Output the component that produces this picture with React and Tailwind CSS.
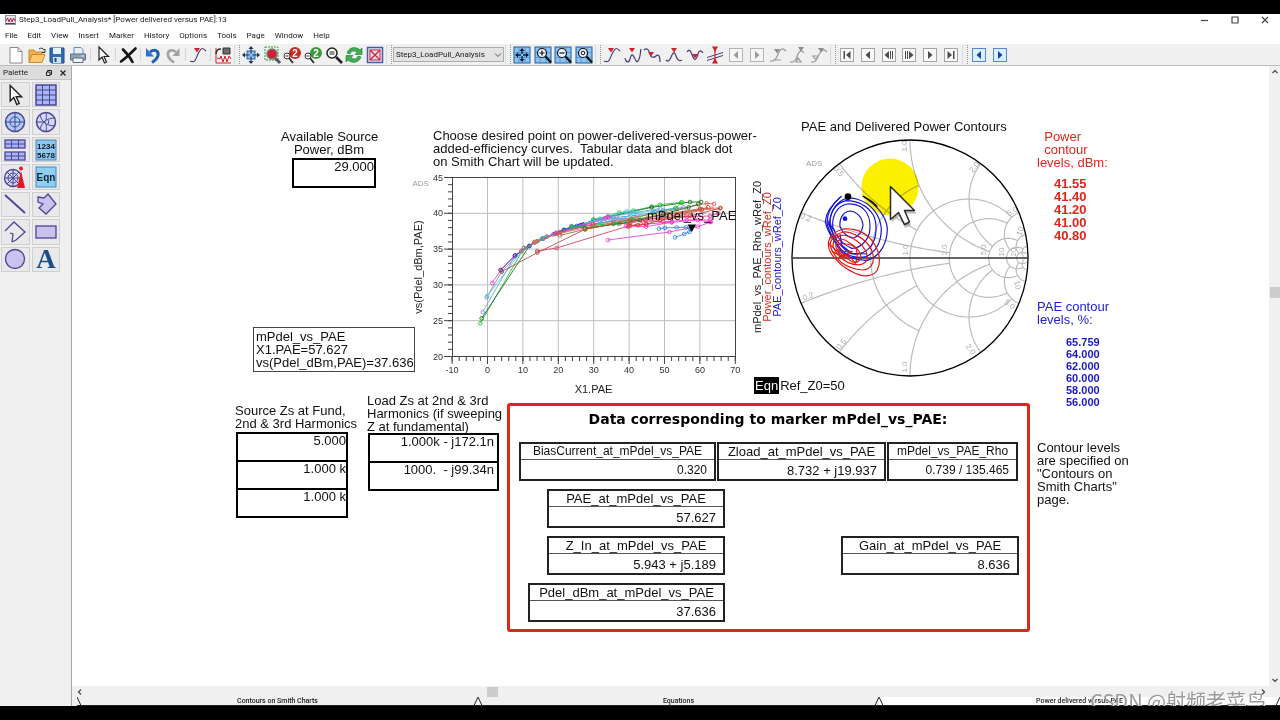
import React from "react";

/* ---------- toolbar icons (20 x 20) ---------- */

const Icon = ({ children, className = "size-5" }) => (
  <svg viewBox="0 0 20 20" className={className} fill="none" aria-hidden="true">
    {children}
  </svg>
);

const NewIcon = () => (
  <Icon>
    <path d="M4 2.500h8l4 4V18H4z" fill="#fff" stroke="#8a8a8a" />
    <path d="M12 2.500v4h4" stroke="#8a8a8a" />
  </Icon>
);
const OpenIcon = () => (
  <Icon>
    <path d="M2 5h5l1.500 2H15v3H5L2 17z" fill="#f3b04a" stroke="#c98a2b" />
    <path d="M2 17.500L5 9.500h13l-3 8z" fill="#ffc76b" stroke="#c98a2b" />
    <path d="M12 4c2-1.500 4-1 5 1l1-1v3.500h-3l1-1" stroke="#333" />
  </Icon>
);
const SaveIcon = () => (
  <Icon>
    <path d="M3 3h14v15H4.500L3 16.500z" fill="#2f6db5" stroke="#1b4b8a" />
    <path d="M6 3h8v6H6z" fill="#e8f1fb" />
    <path d="M6 12h8v6H6z" fill="#cfe0f3" />
    <path d="M7.500 13h2v4h-2z" fill="#1b4b8a" />
  </Icon>
);
const PrintIcon = () => (
  <Icon>
    <path d="M6 9V2.500h7l2 2V9" fill="#e6f0fa" stroke="#6d8fb3" />
    <path d="M2.500 9h15v6h-15z" fill="#8ea3b8" stroke="#5d6f82" />
    <path d="M5 13h10v4.500H5z" fill="#f4f4f4" stroke="#5d6f82" />
    <path d="M13 11h3" stroke="#e8eef5" />
  </Icon>
);
const PointerIcon = ({ className }) => (
  <Icon className={className}>
    <path d="M6 2v13l3-3 2.500 6 2-1-2.500-5.500h4.500z" fill="#fff" stroke="#222" strokeWidth="1.200" />
  </Icon>
);
const CrossIcon = () => (
  <Icon>
    <path d="M3 16.500C8 13 13 8 17.500 3.500M5 4.500c3 3 7 7.500 9.500 12.500" stroke="#151515" strokeWidth="2.600" strokeLinecap="round" />
  </Icon>
);
const UndoIcon = () => (
  <Icon>
    <path d="M7 7c5-3.500 9-1 8 3.500-.7 3-3 5-6 7" stroke="#1d5fae" strokeWidth="3" />
    <path d="M3 3v8.500h8z" fill="#2c74c7" />
  </Icon>
);
const RedoIcon = () => (
  <Icon>
    <path d="M13 7C8 3.500 4 6 5 10.500c.7 3 3 5 6 7" stroke="#a2a2a2" strokeWidth="2.600" />
    <path d="M16.500 3v8h-7z" fill="#a2a2a2" />
  </Icon>
);

const RED = "#d3202c";
const INK = "#4a3b78";

const MarkerCurve = ({ d, mx = 10, my = 7, color = RED, ink = INK }) => (
  <Icon>
    <path d={d} stroke={ink} strokeWidth="1.200" />
    <path d={`M${mx - 3} ${my - 4}h6l-3 4.500z`} fill={color} />
  </Icon>
);
const TraceIcon = () => <MarkerCurve d="M2 16c6 3 6-4 9-9s4-4 7-1" mx={9} my={7} />;
const PeakIcon = () => <MarkerCurve d="M2 13c1 5 4 5 5 1s2-6 4-2 3 7 5 2 1-6 2-10" mx={9} my={7} />;
const SlopeIcon = () => <MarkerCurve d="M1 5c3-3 5 0 6 4s4 4 6 2 4-1 4 6" mx={8} my={11} />;
const MaxIcon = () => <MarkerCurve d="M2 15c3 3 4-1 6-5s3-2 4 1 3 6 6 4" mx={10} my={7} />;
const MinIcon = () => <MarkerCurve d="M2 7c3-4 4 0 6 5s4 1 5-3 3-4 5-1" mx={10} my={13} />;
const LineMarkerIcon = () => (
  <Icon>
    <path d="M2 12.500l16-5M2 15.500l16-5" stroke={INK} />
    <path d="M10 3v14" stroke={RED} strokeWidth="1.200" />
    <path d="M7 1.500h6L10 7zM7 18.500h6L10 13z" fill={RED} />
  </Icon>
);
const GreyA = () => <MarkerCurve d="M2 16c6 1 7-5 9-9s4-4 7-1M5 15h8" mx={9} my={8} color="#8d8d8d" ink="#9a9a9a" />;
const GreyB = () => <MarkerCurve d="M2 17c6 1 6-4 8-8s4-4 6-1M8 17l2-4 3 4z" mx={13} my={6} color="#8d8d8d" ink="#9a9a9a" />;
const GreyC = () => <MarkerCurve d="M2 17c6 1 6-5 9-9s4-4 7-1M4 11h5l-2 4z" mx={12} my={7} color="#8d8d8d" ink="#9a9a9a" />;

const ReportIcon = () => (
  <Icon>
    <path d="M3 3v15h15" stroke={RED} />
    <path d="M4 13l3 1 1-3 2 6 2-6 2 6 2-6 2 3" stroke={RED} />
    <path d="M10 3h7v6h-7z" fill="#6d6d6d" stroke="#333" />
    <path d="M3 9c0-4 2-5 5-5" stroke="#333" strokeWidth="1.500" />
  </Icon>
);

const ViewAllIcon = () => (
  <Icon>
    <rect x="6" y="6" width="8" height="8" fill="#8dbbe8" stroke="#2a62a8" />
    <path d="M10 1l2.500 3h-2v4.500H9.500V4h-2zM10 19l-2.500-3h2v-4.500h1V16h2zM1 10l3-2.500v2h4.500v1H4v2zM19 10l-3 2.500v-2h-4.500v-1H16v-2z" fill="#17345f" />
  </Icon>
);
const ZoomAreaIcon = () => (
  <Icon>
    <rect x="3" y="2" width="13" height="13" stroke="#2d9a3c" strokeDasharray="2 1" />
    <path d="M13 13l5 5" stroke="#555" strokeWidth="3" />
    <circle cx="10" cy="9" r="5" fill="#d8202c" stroke="#777" strokeWidth="1.500" />
  </Icon>
);
const ZoomTwo = ({ color }) => (
  <Icon>
    <circle cx="13" cy="8" r="6" fill={color} />
    <text x="13" y="12" fontSize="10" fontWeight="700" fill="#fff" textAnchor="middle" fontFamily="Liberation Sans, sans-serif">2</text>
    <circle cx="5" cy="11" r="3" fill="#fff" stroke="#333" />
    <path d="M3.500 11h3" stroke="#333" />
    <path d="M7 13l4 5" stroke="#333" strokeWidth="2" />
  </Icon>
);
const ZoomPlain = () => (
  <Icon>
    <circle cx="8" cy="8" r="5" fill="#fff" stroke="#222" strokeWidth="1.500" />
    <path d="M5.500 7h5M5.500 9h5" stroke="#222" />
    <path d="M12 12l6 6" stroke="#222" strokeWidth="2.600" />
  </Icon>
);
const RefreshIcon = () => (
  <Icon>
    <path d="M3 8c2-6 9-7 13-3l2-2v6.500h-7l2-2C10 5 7 6 6 9z" fill="#3fae52" stroke="#1f7d33" strokeWidth=".6" />
    <path d="M17 12c-2 6-9 7-13 3l-2 2v-6.500h7l-2 2c3 2.500 6 1.500 7-1.500z" fill="#3fae52" stroke="#1f7d33" strokeWidth=".6" />
  </Icon>
);
const StopIcon = () => (
  <Icon>
    <rect x="2.500" y="2.500" width="15" height="15" fill="#dfe6f6" stroke="#4a5aa8" strokeWidth="1.500" />
    <path d="M5 5l10 10M15 5L5 15" stroke={RED} strokeWidth="1.400" />
    <rect x="5" y="5" width="10" height="10" stroke={RED} />
  </Icon>
);

const BlueTile = ({ children }) => (
  <Icon>
    <rect x="2" y="2" width="16" height="16" fill="#8cc3f2" stroke="#1f5ca0" />
    <path d="M2 7.500h16M2 12.500h16M7 2v16M13 2v16" stroke="#4d8ed0" strokeWidth=".8" />
    {children}
  </Icon>
);
const TileGlass = ({ children }) => (
  <BlueTile>
    <circle cx="9" cy="8" r="4.500" fill="#eef6ff" stroke="#111" strokeWidth="1.200" />
    <path d="M12.500 11.500l5.500 6" stroke="#111" strokeWidth="2.200" />
    {children}
  </BlueTile>
);
const TileFit = () => (
  <BlueTile>
    <path d="M10 3l2.500 3h-5zM10 17l-2.500-3h5zM3 10l3-2.500v5zM17 10l-3 2.500v-5zM9.300 6h1.400v3h-1.400zM9.300 11h1.400v3h-1.400zM6 9.300h3v1.400H6zM11 9.300h3v1.400h-3z" fill="#0d1b33" />
  </BlueTile>
);
const TileIn = () => (
  <TileGlass>
    <path d="M6.500 8h5M9 5.500v5" stroke="#111" strokeWidth="1.200" />
  </TileGlass>
);
const TileOut = () => (
  <TileGlass>
    <path d="M6.500 8h5" stroke="#111" strokeWidth="1.200" />
  </TileGlass>
);
const TileArea = () => (
  <TileGlass>
    <circle cx="9" cy="8" r="1.800" stroke="#111" />
  </TileGlass>
);

const StepIcon = ({ d, tone = "grey" }) => {
  const tones = {
    faint: { box: "#b4b4b4", bg: "#f6f6f6", ink: "#9c9c9c" },
    grey: { box: "#a5a5a5", bg: "#fbfbfb", ink: "#4b4b4b" },
    blue: { box: "#5b86d6", bg: "#d9f0ff", ink: "#1c3fa0" },
  };
  const t = tones[tone];
  return (
    <Icon>
      <rect x="3.500" y="3.500" width="13" height="13" fill={t.bg} stroke={t.box} />
      <path d={d} fill={t.ink} />
    </Icon>
  );
};
const LEFT = "M12 6v8l-4.500-4z";
const RIGHT = "M8 6v8l4.500-4z";
const FIRST = "M13.500 6v8L9 10zM6.500 6H8v8H6.500z";
const LAST = "M6.500 6v8l4.500-4zM12 6h1.500v8H12z";
const BACK = "M10 6v8l-4.500-4zM11 6h1v8h-1zM13 6h1v8h-1z";
const FORE = "M10 6v8l4.500-4zM8 6h1v8H8zM6 6h1v8H6z";

const ToolButton = ({ label, children }) => (
  <button type="button" aria-label={label} className="flex size-5 shrink-0 items-center justify-center">
    {children}
  </button>
);
const Thin = () => (
  <span className="flex h-full w-[5px] shrink-0 justify-center py-1">
    <span className="w-px bg-[#d4d4d4]" />
  </span>
);
const Grip = () => (
  <span className="flex h-full w-2 shrink-0 justify-center gap-1 py-px">
    <span className="w-px bg-[#dadada]" />
    <span className="w-px border-l border-dotted border-[#9a9a9a]" />
  </span>
);

const Toolbar = () => (
  <div role="toolbar" className="flex h-[22px] shrink-0 items-center overflow-hidden border-b border-[#bdbdbd] bg-[#f0f0f0] pl-[6px]">
    <div className="flex w-[82px] shrink-0 justify-between">
      <ToolButton label="New"><NewIcon /></ToolButton>
      <ToolButton label="Open"><OpenIcon /></ToolButton>
      <ToolButton label="Save"><SaveIcon /></ToolButton>
      <ToolButton label="Print"><PrintIcon /></ToolButton>
    </div>
    <Thin />
    <ToolButton label="Select"><PointerIcon /></ToolButton>
    <Thin />
    <ToolButton label="Delete"><CrossIcon /></ToolButton>
    <Thin />
    <ToolButton label="Undo"><UndoIcon /></ToolButton>
    <ToolButton label="Redo"><RedoIcon /></ToolButton>
    <Thin />
    <ToolButton label="Insert marker"><TraceIcon /></ToolButton>
    <Thin />
    <ToolButton label="Plot options"><ReportIcon /></ToolButton>
    <Grip />
    <div className="flex w-[144px] shrink-0 justify-between">
      <ToolButton label="View all"><ViewAllIcon /></ToolButton>
      <ToolButton label="Zoom to area"><ZoomAreaIcon /></ToolButton>
      <ToolButton label="Zoom out by two"><ZoomTwo color="#c92a22" /></ToolButton>
      <ToolButton label="Zoom in by two"><ZoomTwo color="#3b9a3a" /></ToolButton>
      <ToolButton label="Actual size"><ZoomPlain /></ToolButton>
      <ToolButton label="Refresh"><RefreshIcon /></ToolButton>
      <ToolButton label="Stop"><StopIcon /></ToolButton>
    </div>
    <Grip />
    <div className="relative w-[111px] shrink-0">
      <select aria-label="Default dataset" className="block h-[15px] w-full appearance-none rounded-none border border-[#adadad] bg-[#e3e3e3] px-[2px] py-0 text-[8px] leading-[13px] text-[#1a1a1a]">
        <option>Step3_LoadPull_Analysis</option>
      </select>
      <svg viewBox="0 0 8 8" className="pointer-events-none absolute right-[2px] top-1 size-2" fill="none" aria-hidden="true">
        <path d="M1 2.500L4 5.500l3-3" stroke="#555" />
      </svg>
    </div>
    <Grip />
    <div className="flex w-[82px] shrink-0 justify-between">
      <ToolButton label="Fit plot"><TileFit /></ToolButton>
      <ToolButton label="Zoom plot in"><TileIn /></ToolButton>
      <ToolButton label="Zoom plot out"><TileOut /></ToolButton>
      <ToolButton label="Zoom plot area"><TileArea /></ToolButton>
    </div>
    <Grip />
    <div className="flex w-[227px] shrink-0 justify-between">
      <ToolButton label="New marker"><TraceIcon /></ToolButton>
      <ToolButton label="Peak marker"><PeakIcon /></ToolButton>
      <ToolButton label="Valley marker"><SlopeIcon /></ToolButton>
      <ToolButton label="Max marker"><MaxIcon /></ToolButton>
      <ToolButton label="Min marker"><MinIcon /></ToolButton>
      <ToolButton label="Line marker"><LineMarkerIcon /></ToolButton>
      <ToolButton label="Marker left"><StepIcon d={LEFT} tone="faint" /></ToolButton>
      <ToolButton label="Marker right"><StepIcon d={RIGHT} tone="faint" /></ToolButton>
      <ToolButton label="Delta marker"><GreyA /></ToolButton>
      <ToolButton label="Marker off"><GreyB /></ToolButton>
      <ToolButton label="Delta off"><GreyC /></ToolButton>
    </div>
    <Grip />
    <div className="flex w-[124px] shrink-0 justify-between">
      <ToolButton label="First"><StepIcon d={FIRST} /></ToolButton>
      <ToolButton label="Back"><StepIcon d={LEFT} /></ToolButton>
      <ToolButton label="Step back"><StepIcon d={BACK} /></ToolButton>
      <ToolButton label="Step forward"><StepIcon d={FORE} /></ToolButton>
      <ToolButton label="Forward"><StepIcon d={RIGHT} /></ToolButton>
      <ToolButton label="Last"><StepIcon d={LAST} /></ToolButton>
    </div>
    <Grip />
    <div className="flex shrink-0 gap-px">
      <ToolButton label="Previous page"><StepIcon d={LEFT} tone="blue" /></ToolButton>
      <ToolButton label="Next page"><StepIcon d={RIGHT} tone="blue" /></ToolButton>
    </div>
  </div>
);

/* ---------- palette ---------- */

const Pal = ({ children }) => (
  <svg viewBox="0 0 24 24" className="size-6" fill="none" stroke="#4f4394" aria-hidden="true">
    {children}
  </svg>
);

const palette = [
  ["Pointer", <PointerIcon key="i" className="size-6" />],
  [
    "Rectangular plot",
    <Pal key="i">
      <rect x="2" y="2" width="20" height="20" fill="#a5b8f4" strokeWidth="1.500" />
      <path d="M8.500 2v20M15.500 2v20M2 7h20M2 12h20M2 17h20" />
    </Pal>,
  ],
  [
    "Polar plot",
    <Pal key="i">
      <circle cx="12" cy="12" r="9.500" fill="#a9cdf5" strokeWidth="1.500" />
      <circle cx="12" cy="12" r="5" />
      <path d="M2 12h20M12 2v20" />
    </Pal>,
  ],
  [
    "Smith chart",
    <Pal key="i">
      <circle cx="12" cy="12" r="9.500" fill="#cfd8f6" strokeWidth="1.500" />
      <path d="M2 12h8M6 5c1 4 3 6 4 7-1 1-3 3-4 7M10 12c2-1 3-4 2-9M10 12c2 1 3 4 2 9M21 8c-4 0-8 1-11 4 3 3 7 4 11 4M14 10c1 1 1 3 0 4" />
    </Pal>,
  ],
  [
    "Stacked plot",
    <Pal key="i">
      <rect x="2" y="2" width="20" height="8" fill="#a5b8f4" strokeWidth="1.300" />
      <rect x="2" y="14" width="20" height="8" fill="#a5b8f4" strokeWidth="1.300" />
      <path d="M2 6h20M2 18h20M8.500 2v8M15.500 2v8M8.500 14v8M15.500 14v8" />
    </Pal>,
  ],
  [
    "List",
    <Pal key="i">
      <rect x="2" y="2" width="20" height="20" fill="#8fc6ee" stroke="#4a86b8" />
      <g fill="#0a1a24" stroke="none" fontSize="8" fontWeight="700" fontFamily="Liberation Sans, sans-serif" textAnchor="middle">
        <text x="12" y="10.500">1234</text>
        <text x="12" y="20">5678</text>
      </g>
    </Pal>,
  ],
  [
    "Antenna plot",
    <Pal key="i">
      <circle cx="10" cy="13" r="8.500" fill="#cfd8f6" strokeWidth="1.300" />
      <circle cx="10" cy="13" r="5" />
      <path d="M2 13h16M10 5v16M4 7l12 12M16 7L4 19" />
      <path d="M18 6l4 17h-8z" fill="#e01b24" stroke="none" />
      <circle cx="18" cy="3.500" r="2" fill="#e01b24" stroke="none" />
    </Pal>,
  ],
  [
    "Equation",
    <Pal key="i">
      <rect x="2" y="2" width="20" height="20" fill="#8fd0f2" stroke="#4a86b8" />
      <text x="12" y="15.500" fill="#0a2433" stroke="none" fontSize="10" fontWeight="700" fontFamily="Liberation Sans, sans-serif" textAnchor="middle">Eqn</text>
    </Pal>,
  ],
  ["Line", <Pal key="i"><path d="M2 3l20 18" strokeWidth="1.800" /></Pal>],
  ["Polygon", <Pal key="i"><path d="M4 5l6 1 4-4 8 10-10 10-7-6 4-4-5-2z" fill="#c9c3ee" strokeWidth="1.300" /></Pal>],
  ["Polyline", <Pal key="i"><path d="M2 11l9-9 11 10-9 8M9 22l1-8-3-1M9 22l4-2" strokeWidth="1.300" /></Pal>],
  ["Rectangle", <Pal key="i"><rect x="2" y="6" width="20" height="12" fill="#c9c3ee" strokeWidth="1.300" /></Pal>],
  ["Circle", <Pal key="i"><circle cx="12" cy="12" r="9.500" fill="#c9c3ee" strokeWidth="1.300" /></Pal>],
  [
    "Text",
    <Pal key="i">
      <text x="12" y="21" fill="#1d4f86" stroke="none" fontSize="27" fontWeight="700" fontFamily="Liberation Serif, serif" textAnchor="middle">A</text>
    </Pal>,
  ],
];

const Palette = () => (
  <aside className="w-[72px] shrink-0 border-r border-[#a9a9a9] bg-[#f0f0f0]">
    <div className="flex h-[14px] items-center border-b border-[#c4c4c4] bg-[#dcdcdc] pl-[3px] pr-1">
      <h2 className="flex-1 text-[8px] leading-[12px]">Palette</h2>
      <button type="button" aria-label="Float palette" className="mr-[6px]">
        <svg viewBox="0 0 8 8" className="size-2" fill="none" stroke="#222" aria-hidden="true">
          <path d="M2.500 3V1.500h4v4H5M1.500 3h3.500v3.500H1.500z" />
        </svg>
      </button>
      <button type="button" aria-label="Close palette">
        <svg viewBox="0 0 8 8" className="size-2" fill="none" stroke="#222" strokeWidth="1.200" aria-hidden="true">
          <path d="M1.500 1.500l5 5M6.500 1.500l-5 5" />
        </svg>
      </button>
    </div>
    <div className="grid h-[192px] w-[60px] grid-cols-2 grid-rows-7 gap-[2px] pl-px pt-[2px]">
      {palette.map(([label, icon]) => (
        <button key={label} type="button" aria-label={label} className="flex items-center justify-center border border-[#cfcfcf] bg-[#e9e9ec]">
          {icon}
        </button>
      ))}
    </div>
  </aside>
);

/* ---------- Pdel versus PAE plot ---------- */

/* coordinates are three units to the pixel */
const curves = [
  ["#19c22b", "241,610 372,384 404,366 426,356 470,340 515,318 545,316 580,299 625,288 658,278 700,272 755,260 780,254 844,247"],
  ["#0b6b16", "245,595 388,378 412,364 440,350 492,330 515,320 550,314 580,300 755,262 870,246 903,246"],
  ["#8b8b8b", "260,532 305,455 372,384 426,356 492,330 545,316"],
  ["#7f8fe0", "248,576 345,408 388,378 440,350 515,320 625,292 688,280 780,266"],
  ["#e23ad2", "277,489 302,450 345,408 365,393 404,368 460,343 480,336 545,318 616,295"],
  ["#2b2bd8", "302,450 345,406 388,378 430,356 465,341 492,330 530,318 540,316 545,315 550,314"],
  ["#35cfe0", "262,528 366,392 426,356 470,340 600,296 680,274 705,274"],
  ["#a44a3a", "305,455 412,398 555,328 640,312 690,310 735,300 800,290 905,268"],
  ["#d8305f", "412,393 470,384 685,318 740,312 815,306"],
  ["#e23ad2", "624,360 808,336 893,320 933,306"],
  ["#2f7fe0", "777,326 795,324 830,322 858,322 872,326 868,336 853,342 825,352"],
  ["#e05048", "364,393 404,366 480,338 580,312 700,292 830,268 920,250 942,252"],
  ["#e07048", "404,366 470,342 580,318 690,300 860,272 900,266 962,264"],
  ["#e23a9a", "470,338 578,314 640,304 740,296 860,290 930,288 955,280"],
  ["#ff2fd0", "545,318 616,294 625,292 700,300 790,306 860,300 930,300"],
  ["#35cfe0", "580,300 605,310 640,298 672,294 700,280 760,272 825,266"],
  ["#0b6b16", "555,325 658,311 720,300 790,282 866,262 895,252"],
  ["#19c22b", "515,322 640,310 695,297 758,280 827,264 846,248"],
  ["#c4302a", "690,318 714,316 738,313 780,300 870,288 960,265"],
  ["#b05a30", "480,346 555,328 690,302 800,284 900,268 924,262"],
  ["#ff2fd0", "678,318 738,320 815,307 893,300 930,306"],
  ["#5a9be0", "600,304 650,292 712,286 764,276 790,270 850,262"],
  ["#e05048", "684,320 730,306 790,296 850,284 905,270 935,266"],
];

const xTicks = [-10, 0, 10, 20, 30, 40, 50, 60, 70];
const yTicks = [20, 25, 30, 35, 40, 45];
const px = (v) => 487.5 + v * 3.54;
const py = (v) => 356.5 - (v - 20) * 7.16;
const range = (a, b, s) => Array.from({ length: Math.round((b - a) / s) + 1 }, (_, i) => a + i * s);

const PaePlot = () => (
  <svg viewBox="412 168 340 226" className="h-[226px] w-[340px]" fill="none" fontFamily="Liberation Sans, Arial, sans-serif" role="img" aria-label="vs(Pdel_dBm,PAE) against X1.PAE">
    <g stroke="#bdbdbd">
      {xTicks.slice(1, -1).map((v) => <path key={v} d={`M${px(v)} 177.500V356`} />)}
      {yTicks.slice(1, -1).map((v) => <path key={v} d={`M452 ${py(v)}H735`} />)}
    </g>
    <g stroke="#444">
      {range(-10, 70, 2).map((v) => <path key={v} d={`M${px(v)} 356v5`} />)}
      {range(20, 45, 1).map((v) => <path key={v} d={`M448 ${py(v)}h4`} />)}
      {xTicks.map((v) => <path key={v} d={`M${px(v)} 356v8`} />)}
      {yTicks.map((v) => <path key={v} d={`M444 ${py(v)}h8`} />)}
      <rect x="452.500" y="177.500" width="283" height="179" />
    </g>
    <g transform="translate(400 120) scale(0.33333)">
      {curves.map(([color, pts], i) => (
        <g key={i} stroke={color} strokeWidth="2.500">
          <polyline points={pts} />
          {pts.split(" ").map((p) => {
            const [x, y] = p.split(",");
            return <circle key={p} cx={x} cy={y} r="5.500" />;
          })}
        </g>
      ))}
    </g>
    <path d="M687.500 224.500h8.500l-4.200 7.500z" fill="#000" />
    <text x="647" y="220" fontSize="13" fill="#111">mPdel_vs_PAE</text>
    <g fontSize="9" fill="#333">
      {xTicks.map((v) => <text key={v} x={px(v)} y="373" textAnchor="middle">{v}</text>)}
      {yTicks.map((v) => <text key={v} x="443" y={py(v) + 3} textAnchor="end">{v}</text>)}
    </g>
    <text x="412.500" y="186" fontSize="8" fill="#999">ADS</text>
    <text x="593.500" y="393" fontSize="11" fill="#222" textAnchor="middle">X1.PAE</text>
    <text transform="translate(422 267) rotate(-90)" fontSize="11" fill="#222" textAnchor="middle">vs(Pdel_dBm,PAE)</text>
  </svg>
);

/* ---------- Smith chart ---------- */

const CX = 910;
const CY = 258;
const R = 118;
const gamma = (r, x) => {
  const d = (r + 1) * (r + 1) + x * x;
  const re = ((r - 1) * (r + 1) + x * x) / d;
  const im = (2 * x) / d;
  return `${(CX + R * re).toFixed(2)},${(CY - R * im).toFixed(2)}`;
};
const resistanceArc = (r, limit) => {
  const a = Math.atan(limit / (r + 1));
  return range(-40, 40, 1).map((i) => gamma(r, (r + 1) * Math.tan((a * i) / 40))).join(" ");
};
const reactanceArc = (x, limit) =>
  range(0, 40, 1).map((i) => gamma(limit * Math.pow(i / 40, 2), x)).join(" ");

const resistance = [[0.5, 1], [1, 5], [2, 5], [5, 10], [10, 20], [20, 50]];
const reactance = [[0.2, 2], [0.5, 1], [1, 5], [2, 5], [5, 10], [10, 20], [20, 50]];

const blueContours = [
  "M305 258C285 275 258 305 256 335C262 370 280 385 296 415C315 440 350 452 382 451C420 440 442 400 442 355C438 315 410 285 368 258",
  "M300 262C275 285 258 310 262 345C275 385 290 400 305 420C325 440 355 446 378 440C410 425 424 395 424 355C420 315 395 280 350 267C330 262 315 264 300 275C280 290 268 315 270 345",
  "M318 272C285 280 268 310 270 345C280 385 300 405 322 425C345 440 375 430 392 410C412 385 412 340 400 315C380 285 350 272 318 272",
  "M322 282C292 288 276 315 278 350C290 385 310 405 335 415C360 415 380 395 388 370C394 335 385 305 362 290C348 282 335 281 322 282",
  "M330 303C308 306 298 325 300 350C306 368 325 384 340 384C356 380 368 362 369 345C366 320 350 305 330 303Z",
  "M262 330L284 364M264 340L290 392M300 372L305 406L335 430L380 432",
];
const redContours = [
  "M312 357C290 362 268 375 265 400C264 425 280 440 292 452C305 470 325 480 345 490C370 502 400 500 412 480C420 462 420 440 412 420C400 390 375 365 340 358C330 356 320 356 312 357Z",
  "M310 366C290 370 272 385 270 404C275 430 290 445 305 458C325 472 345 478 368 480C392 478 402 460 400 440C396 412 375 388 345 374C332 367 320 364 310 366Z",
  "M305 376C288 380 276 395 280 412C290 436 305 448 325 458C345 466 368 468 380 452C386 432 374 410 352 394C335 382 320 374 305 376Z",
  "M302 388C290 392 284 404 290 416C300 434 318 446 338 456C352 460 364 450 362 436C358 420 345 408 330 400C320 392 312 386 302 388Z",
  "M318 402L298 400C292 410 296 422 310 432L335 446L346 460L352 445L350 420C346 410 336 404 318 402M298 424L338 424L300 440L330 436",
  "M268 385L296 375M266 400L300 432M275 425L312 440",
];

const smithLabels = [
  ["1.0", 904, 146, -90], ["1.0", 904, 367, -90], ["2.0", 974, 167, -50], ["2.0", 971, 349, 55],
  ["0.5", 839, 171, 50], ["0.5", 841, 344, -50], ["0.2", 806, 217, 20], ["0.2", 808, 296, -20],
  ["5.0", 1012, 211, -30], ["5.0", 1010, 304, 40], ["1.0", 905, 250, -90], ["2.0", 944, 250, -90],
  ["5.0", 983, 250, -90], ["10", 1001, 252, -90], ["20", 1013, 252, -90], ["10", 1020, 231, -70], ["10", 1018, 285, 75],
];

const SmithChart = () => (
  <svg viewBox="752 133 278 244" className="h-[244px] w-[278px]" fill="none" fontFamily="Liberation Sans, Arial, sans-serif" role="img" aria-label="Smith chart with power and PAE contours">
    <circle cx="890" cy="187" r="28.500" fill="#fbf000" />
    <g stroke="#bcbcbc" strokeWidth="1.200" className="mix-blend-multiply">
      {resistance.map(([r, lim]) => <polyline key={r} points={resistanceArc(r, lim)} />)}
      {reactance.map(([x, lim]) => (
        <React.Fragment key={x}>
          <polyline points={reactanceArc(x, lim)} />
          <polyline points={reactanceArc(-x, lim)} />
        </React.Fragment>
      ))}
    </g>
    <g fontSize="8" fill="#adadad" textAnchor="middle">
      {smithLabels.map(([t, x, y, a], i) => (
        <text key={i} transform={`translate(${x} ${y}) rotate(${a})`} y="3">{t}</text>
      ))}
    </g>
    <circle cx={CX} cy={CY} r={R} stroke="#000" strokeWidth="1.300" />
    <path d="M792 258h236" stroke="#333" strokeWidth="1.500" />
    <g transform="translate(740 110) scale(0.33333)" strokeWidth="3.600">
      {blueContours.map((d) => <path key={d} d={d} stroke="#1414d2" />)}
      {redContours.map((d) => <path key={d} d={d} stroke="#e01a12" />)}
      <path d="M368 258C384 266 400 276 412 290" stroke="#000" />
      <circle cx="315" cy="326" r="7" fill="#1414d2" />
      <circle cx="324" cy="260" r="10" fill="#000" />
    </g>
    <path d="M892 188v34l7-6 6 12 6-3-5-11.500h11z" fill="#777" opacity=".5" />
    <path d="M890.500 186.500v33l8-7 6 12 5-2.500-5-11.500h10z" fill="#fff" stroke="#2a2a2a" strokeWidth="1.500" strokeLinejoin="round" />
    <text x="806" y="166" fontSize="8" fill="#999">ADS</text>
    <g fontSize="11" textAnchor="middle">
      <text transform="translate(761 257) rotate(-90)" fill="#222">mPdel_vs_PAE_Rho_wRef_Z0</text>
      <text transform="translate(771 257) rotate(-90)" fill="#e0261c">Power_contours_wRef_Z0</text>
      <text transform="translate(781 257) rotate(-90)" fill="#2020d8">PAE_contours_wRef_Z0</text>
    </g>
  </svg>
);

/* ---------- data tables ---------- */

const Readout = ({ title, value, width, small }) => (
  <table className={`h-[38px] border-collapse border-2 border-[#222] ${width} ${small ? "text-[12px]" : "text-[13px]"}`}>
    <thead>
      <tr>
        <th className="border-b border-[#555] p-0 text-center font-normal leading-[15px]">{title}</th>
      </tr>
    </thead>
    <tbody>
      <tr>
        <td className="pb-0 pl-0 pr-[7px] pt-[2px] text-right leading-[17px]">{value}</td>
      </tr>
    </tbody>
  </table>
);

const ListTable = ({ rows, width, label, pad = "pr-0" }) => (
  <table aria-label={label} className={`border-collapse border-2 border-black ${width}`}>
    <tbody>
      {rows.map((r, i) => (
        <tr key={i}>
          <td className={`h-7 whitespace-pre border-2 border-black py-0 pl-0 text-right align-top leading-[14px] ${pad}`}>{r}</td>
        </tr>
      ))}
    </tbody>
  </table>
);

const powerLevels = ["41.55", "41.40", "41.20", "41.00", "40.80"];
const paeLevels = ["65.759", "64.000", "62.000", "60.000", "58.000", "56.000"];

const Canvas = () => (
  <main className="flex min-h-0 flex-1 items-start overflow-hidden bg-white pl-[162px] pt-[54px] font-['Liberation_Sans',Arial,sans-serif] text-[13px] leading-[13px] text-[#111]">
    <div className="shrink-0">
      <div className="flex h-[274px]">
        <section className="flex w-[178px] flex-col justify-between pb-[22px] pt-[10px]">
          <div className="flex flex-col pl-[47px]">
            <h3 className="w-24 whitespace-nowrap text-center">Available Source<br />Power, dBm</h3>
            <div className="ml-[11px] mt-[2px] w-[84px]">
              <ListTable rows={["29.000"]} width="w-full" label="Available source power" />
            </div>
          </div>
          <div className="ml-[19px] w-max whitespace-nowrap border border-[#444] py-[2px] pl-[2px]">
            mPdel_vs_PAE<br />X1.PAE=57.627<br />vs(Pdel_dBm,PAE)=37.636
          </div>
        </section>
        <section className="flex w-[340px] flex-col pt-[9px]">
          <p className="whitespace-pre pl-[21px]">
            Choose desired point on power-delivered-versus-power-<br />
            added-efficiency curves.{"  "}Tabular data and black dot<br />
            on Smith Chart will be updated.
          </p>
          <PaePlot />
        </section>
        <section className="flex w-[278px] flex-col">
          <h3 className="h-[13px] whitespace-nowrap pl-[49px]">PAE and Delivered Power Contours</h3>
          <SmithChart />
          <p className="flex h-[17px] items-center gap-px pl-[2px]">
            <span className="bg-black px-px py-[2px] text-white">Eqn</span>Ref_Z0=50
          </p>
        </section>
      </div>
      <div className="flex items-start">
        <section className="w-[132px] pt-[10px]">
          <h3 className="whitespace-nowrap pl-px">Source Zs at Fund,<br />2nd &amp; 3rd Harmonics</h3>
          <div className="pl-[2px] pt-[2px]">
            <ListTable rows={["5.000", "1.000 k", "1.000 k"]} width="w-[112px]" label="Source impedances" />
          </div>
        </section>
        <section className="w-[141px]">
          <h3 className="whitespace-nowrap pl-px">Load Zs at 2nd &amp; 3rd<br />Harmonics (if sweeping<br />Z at fundamental)</h3>
          <div className="pl-[2px]">
            <ListTable rows={["1.000k - j172.1n", "1000.  - j99.34n"]} width="w-[131px]" label="Load impedances" pad="pr-[3px]" />
          </div>
        </section>
        <section className="mt-[9px] h-[229px] w-[523px] rounded-[3px] border-[3px] border-[#e0261c] pl-[9px] pt-1">
          <h3 className="pr-[10px] text-center font-['DejaVu_Sans',sans-serif] text-[14px] font-bold leading-[18px] text-black">Data corresponding to marker mPdel_vs_PAE:</h3>
          <div className="mt-[14px] flex flex-col gap-2">
            <div className="flex gap-px">
              <Readout title="BiasCurrent_at_mPdel_vs_PAE" value="0.320" width="w-[197px]" small />
              <Readout title="Zload_at_mPdel_vs_PAE" value="8.732 + j19.937" width="w-[169px]" />
              <Readout title="mPdel_vs_PAE_Rho" value="0.739 / 135.465" width="w-[131px]" small />
            </div>
            <div className="pl-7">
              <Readout title="PAE_at_mPdel_vs_PAE" value="57.627" width="w-[178px]" />
            </div>
            <div className="flex justify-between pl-7 pr-2">
              <Readout title="Z_In_at_mPdel_vs_PAE" value="5.943 + j5.189" width="w-[178px]" />
              <Readout title="Gain_at_mPdel_vs_PAE" value="8.636" width="w-[178px]" />
            </div>
            <div className="pl-[9px]">
              <Readout title="Pdel_dBm_at_mPdel_vs_PAE" value="37.636" width="w-[197px]" />
            </div>
          </div>
        </section>
      </div>
    </div>
    <section className="shrink-0 whitespace-nowrap pl-[7px] pt-[10px]">
      <h3 className="whitespace-pre text-[#e0261c]">{"  Power\n  contour\nlevels, dBm:"}</h3>
      <ul className="mt-2 pl-[17px] font-bold text-[#e0261c]">
        {powerLevels.map((v) => <li key={v}>{v}</li>)}
      </ul>
      <h3 className="mt-[58px] text-[#2020d8]">PAE contour<br />levels, %:</h3>
      <ul className="mt-[10px] pl-[29px] text-[11px] font-bold leading-[12px] text-[#1a1ac8]">
        {paeLevels.map((v) => <li key={v}>{v}</li>)}
      </ul>
      <p className="mt-[33px]">Contour levels<br />are specified on<br />"Contours on<br />Smith Charts"<br />page.</p>
    </section>
  </main>
);

/* ---------- frame ---------- */

const Chevron = ({ d }) => (
  <svg viewBox="0 0 8 8" className="size-2" fill="none" stroke="#444" strokeWidth="1.200" aria-hidden="true">
    <path d={d} />
  </svg>
);

const Tab = ({ label, active }) => (
  <button
    type="button"
    role="tab"
    aria-selected={!!active}
    className={`flex h-[9px] flex-1 items-stretch border-b border-[#222] ${active ? "bg-white" : "bg-[#f0f0f0]"}`}
  >
    <svg viewBox="0 0 6 9" className="h-[9px] w-[6px]" fill="none" stroke="#222" aria-hidden="true"><path d="M0 0l4 8.500" /></svg>
    <span className="flex-1 text-[7px] font-medium leading-[9px] text-[#222]">{label}</span>
    <svg viewBox="0 0 6 9" className="h-[9px] w-[6px]" fill="none" stroke="#222" aria-hidden="true"><path d="M6 0L2 8.500" /></svg>
  </button>
);

const menus = ["File", "Edit", "View", "Insert", "Marker", "History", "Options", "Tools", "Page", "Window", "Help"];

export default function App() {
  return (
    <div className="relative flex h-screen flex-col overflow-hidden border-y-[14px] border-black bg-white font-[Roboto,'Open_Sans',sans-serif] text-[#1a1a1a]">
      <header className="flex h-[12px] shrink-0 items-center pl-[5px]">
        <svg viewBox="0 0 11 10" className="mr-[3px] h-[10px] w-[11px]" fill="none" aria-hidden="true">
          <rect x=".5" y=".5" width="10" height="9" fill="#e3e3ee" stroke="#8f8fae" />
          <path d="M1 6l1.500-3L4 7l1.500-4L7 7l1.500-4L10 6" stroke="#c4263a" />
          <path d="M1 8.500h9" stroke="#445" />
        </svg>
        <h1 className="flex-1 text-[8px] leading-[12px]">Step3_LoadPull_Analysis* [Power delivered versus PAE]:13</h1>
        <div className="flex gap-[22px] pr-[11px]">
          <button type="button" aria-label="Minimize"><Chevron d="M0 4.500h7" /></button>
          <button type="button" aria-label="Maximize"><Chevron d="M1 1h6v6H1z" /></button>
          <button type="button" aria-label="Close"><Chevron d="M1 1l6 6M7 1L1 7" /></button>
        </div>
      </header>
      <nav className="flex h-[18px] shrink-0 items-center pt-[2px]">
        {menus.map((m) => (
          <button key={m} type="button" className="px-[5px] text-[8px] leading-[12px]">{m}</button>
        ))}
      </nav>
      <Toolbar />
      <div className="flex min-h-0 flex-1">
        <Palette />
        <div className="flex min-w-0 flex-1 flex-col">
          <div className="flex min-h-0 flex-1">
            <Canvas />
            <div className="flex w-[11px] shrink-0 flex-col items-center justify-between bg-[#f0f0f0] py-[2px]">
              <Chevron d="M1.500 5L4 2.500 6.500 5" />
              <span className="mb-[168px] h-[11px] w-[10px] bg-[#cdcdcd]" />
              <Chevron d="M1.500 3L4 5.500 6.500 3" />
            </div>
          </div>
          <div className="flex h-[11px] shrink-0 items-center justify-between bg-[#f0f0f0] pl-1 pr-[13px]">
            <Chevron d="M5 1.500L2.500 4 5 6.500" />
            <span className="mr-[358px] h-[10px] w-[11px] bg-[#cdcdcd]" />
            <Chevron d="M3 1.500L5.500 4 3 6.500" />
          </div>
          <div role="tablist" className="flex shrink-0 bg-[#f0f0f0] pl-[5px]">
            <Tab label="Contours on Smith Charts" />
            <Tab label="Equations" />
            <Tab label="Power delivered versus PAE" active />
          </div>
        </div>
      </div>
      <span className="pointer-events-none absolute -bottom-[8px] right-[14px] whitespace-nowrap font-['Noto_Sans_CJK_SC',sans-serif] text-[20px] font-normal leading-[26px] text-[#999] [text-shadow:1px_1px_1px_#fff]">
        CSDN @射频老菜鸟
      </span>
    </div>
  );
}
